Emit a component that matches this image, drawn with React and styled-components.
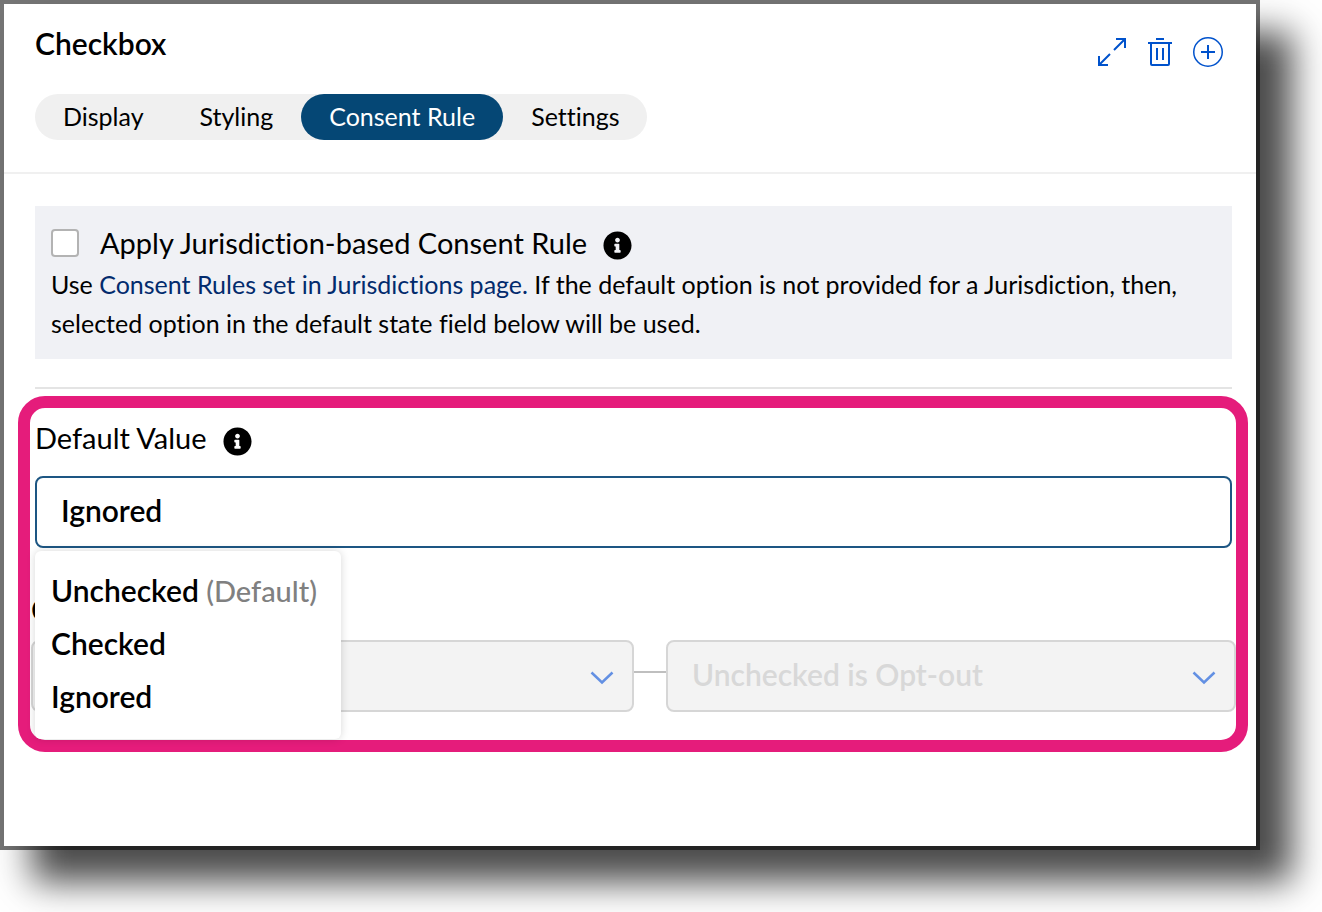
import React, { useState } from 'react';
import styled, { createGlobalStyle } from 'styled-components';
import { FaInfoCircle } from 'react-icons/fa';

const GlobalStyle = createGlobalStyle`
  * {
    box-sizing: border-box;
  }

  body {
    margin: 0;
    background-color: #fff;
    color: #000;
    font-family: Lato, "Open Sans", sans-serif;
    font-variant-ligatures: none;
  }

  button, input, select {
    font-family: inherit;
    font-variant-ligatures: inherit;
    color: inherit;
  }
`;

const Page = styled.div`
  padding: 4px 66px 66px 4px;
`;

const Panel = styled.main`
  background-color: #fff;
  outline: 4px solid rgba(0, 0, 0, 0.54);
  box-shadow: 32px 32px 34px 4px rgba(0, 0, 0, 0.71);
`;

const Header = styled.header`
  padding: 24px 24px 32px 31px;
  border-bottom: 2px solid #f0f0f0;
`;

const TitleRow = styled.div`
  display: flex;
  justify-content: space-between;
  align-items: flex-start;
  margin-bottom: 18px;
`;

const Title = styled.h1`
  margin: 0;
  font-size: 30px;
  line-height: 30px;
  font-weight: 600;
`;

const Actions = styled.div`
  display: flex;
`;

const IconButton = styled.button`
  display: flex;
  width: 48px;
  height: 48px;
  padding: 8px;
  border: none;
  background: none;
  cursor: pointer;

  svg {
    width: 32px;
    height: 32px;
    fill: none;
    stroke: #0052cc;
    stroke-width: 2;
  }
`;

const Tabs = styled.div`
  display: inline-flex;
  border-radius: 23px;
  background-color: #f0f0f0;
`;

const Tab = styled.button`
  height: 46px;
  padding: 0 28px 2px;
  border: none;
  border-radius: 23px;
  background-color: ${(props) => (props.$active ? '#054775' : 'transparent')};
  color: ${(props) => (props.$active ? '#fff' : '#000')};
  font-size: 25px;
  line-height: 44px;
  cursor: pointer;
`;

const Body = styled.div`
  padding: 32px 24px 94px 31px;
`;

const Notice = styled.section`
  padding: 18px 16px 16px;
  background-color: #f0f1f5;
`;

const CheckRow = styled.div`
  display: flex;
  align-items: center;
  height: 37px;
  margin-bottom: 4px;
`;

const Checkbox = styled.input`
  appearance: none;
  width: 28px;
  height: 28px;
  margin: 0 21px 0 0;
  border: 2px solid #b3b3b3;
  border-radius: 4px;
  background-color: ${(props) => (props.checked ? '#054775' : '#fff')};
`;

const Label = styled.label`
  margin-right: 16px;
  font-size: 29px;
  line-height: 36px;
`;

const InfoIcon = styled(FaInfoCircle)`
  width: 29px;
  height: 29px;
  margin-top: 6px;
`;

const NoticeText = styled.p`
  margin: 0;
  font-size: 25px;
  line-height: 39px;
`;

const Link = styled.a`
  color: #022b6d;
  text-decoration: none;
`;

const Divider = styled.hr`
  height: 2px;
  margin: 28px 0 7px;
  border: none;
  background-color: #e4e4e4;
`;

const Highlight = styled.section`
  margin: 0 -16px 0 -17px;
  padding-bottom: 28px;
  border: 12px solid #e51c7b;
  border-radius: 27px;
`;

const Field = styled.div`
  position: relative;
  margin: 0 4px 0 5px;
`;

const FieldHeader = styled.div`
  display: flex;
  align-items: center;
  height: 60px;
  margin-bottom: 8px;
`;

const ValueInput = styled.input`
  display: block;
  width: 100%;
  height: 72px;
  padding: 0 24px 4px;
  border: 2px solid #1d5683;
  border-radius: 8px;
  outline: none;
  background-color: #fff;
  font-size: 30px;
  font-weight: 600;
`;

const Menu = styled.ul`
  position: absolute;
  top: 143px;
  left: 0;
  z-index: 1;
  margin: 0;
  padding: 13px 24px 16px 16px;
  border-radius: 6px;
  background-color: #fff;
  box-shadow: 0 0 8px rgba(0, 0, 0, 0.16);
  list-style: none;
`;

const Option = styled.li`
  font-size: 30px;
  line-height: 53px;
  font-weight: 600;
  white-space: nowrap;
  cursor: pointer;
`;

const Hint = styled.span`
  color: #808080;
  font-size: 29px;
  font-weight: 500;
`;

const RuleLabel = styled.div`
  margin: 43px 0 13px 1px;
  font-size: 30px;
  line-height: 36px;
  font-weight: 500;
`;

const RuleRow = styled.div`
  display: flex;
  align-items: center;
  padding-left: 1px;
`;

const Connector = styled.div`
  width: 32px;
  height: 2px;
  margin-bottom: 8px;
  background-color: #bfbfbf;
`;

const SelectBox = styled.div`
  display: grid;
  flex: ${(props) => props.$grow} 1 0;
  align-items: center;

  svg {
    grid-area: 1 / 1;
    justify-self: end;
    width: 24px;
    height: 14px;
    margin: 4px 20px 0 0;
    fill: none;
    stroke: #6390e3;
    stroke-width: 2.5;
    pointer-events: none;
  }
`;

const Select = styled.select`
  grid-area: 1 / 1;
  appearance: none;
  width: 100%;
  height: 72px;
  padding: 0 64px 4px 24px;
  border: 2px solid #d6d6d6;
  border-radius: 8px;
  background-color: #f3f3f3;
  color: #d8d8d8;
  font-size: 30px;
  font-weight: 600;
  opacity: 1;
`;

const ExpandIcon = () => (
  <svg viewBox="0 0 32 32">
    <path d="M20 3H29V12M29 3L18 14M3 20V29H12M3 29L14 18" />
  </svg>
);

const TrashIcon = () => (
  <svg viewBox="0 0 32 32">
    <path d="M12 3H20M4 7H28M7 7V28Q7 29 8 29H24Q25 29 25 28V7M13 12V24M19 12V24" />
  </svg>
);

const AddIcon = () => (
  <svg viewBox="0 0 32 32">
    <circle cx="16" cy="16" r="14.25" strokeWidth="1.5" />
    <path d="M9 16H23M16 9V23" />
  </svg>
);

const Chevron = () => (
  <svg viewBox="0 0 24 14">
    <path d="M1.5 1.5L12 11.5L22.5 1.5" />
  </svg>
);

const tabs = ['Display', 'Styling', 'Consent Rule', 'Settings'];
const options = ['Unchecked', 'Checked', 'Ignored'];

const App = () => {
  const [activeTab, setActiveTab] = useState('Consent Rule');
  const [applyRule, setApplyRule] = useState(false);
  const [value, setValue] = useState('Ignored');

  return (
    <>
      <GlobalStyle />
      <Page>
        <Panel>
          <Header>
            <TitleRow>
              <Title>Checkbox</Title>
              <Actions>
                <IconButton aria-label="Expand"><ExpandIcon /></IconButton>
                <IconButton aria-label="Delete"><TrashIcon /></IconButton>
                <IconButton aria-label="Add"><AddIcon /></IconButton>
              </Actions>
            </TitleRow>
            <Tabs>
              {tabs.map((tab) => (
                <Tab key={tab} $active={tab === activeTab} onClick={() => setActiveTab(tab)}>
                  {tab}
                </Tab>
              ))}
            </Tabs>
          </Header>
          <Body>
            <Notice>
              <CheckRow>
                <Checkbox
                  type="checkbox"
                  id="applyRule"
                  checked={applyRule}
                  onChange={(e) => setApplyRule(e.target.checked)}
                />
                <Label htmlFor="applyRule">Apply Jurisdiction-based Consent Rule</Label>
                <InfoIcon />
              </CheckRow>
              <NoticeText>
                Use <Link href="#jurisdictions">Consent Rules set in Jurisdictions page.</Link> If the
                default option is not provided for a Jurisdiction, then, selected option in the
                default state field below will be used.
              </NoticeText>
            </Notice>
            <Divider />
            <Highlight>
              <Field>
                <FieldHeader>
                  <Label htmlFor="defaultValue">Default Value</Label>
                  <InfoIcon />
                </FieldHeader>
                <ValueInput id="defaultValue" role="combobox" aria-expanded="true" value={value} readOnly />
                <Menu role="listbox">
                  {options.map((option) => (
                    <Option
                      key={option}
                      role="option"
                      aria-selected={option === value}
                      onClick={() => setValue(option)}
                    >
                      {option}
                      {option === 'Unchecked' && <Hint> (Default)</Hint>}
                    </Option>
                  ))}
                </Menu>
              </Field>
              <RuleLabel>C</RuleLabel>
              <RuleRow>
                <SelectBox $grow={603}>
                  <Select aria-label="Checked rule" disabled>
                    <option></option>
                  </Select>
                  <Chevron />
                </SelectBox>
                <Connector />
                <SelectBox $grow={570}>
                  <Select aria-label="Unchecked rule" disabled>
                    <option>Unchecked is Opt-out</option>
                  </Select>
                  <Chevron />
                </SelectBox>
              </RuleRow>
            </Highlight>
          </Body>
        </Panel>
      </Page>
    </>
  );
};

export default App;
